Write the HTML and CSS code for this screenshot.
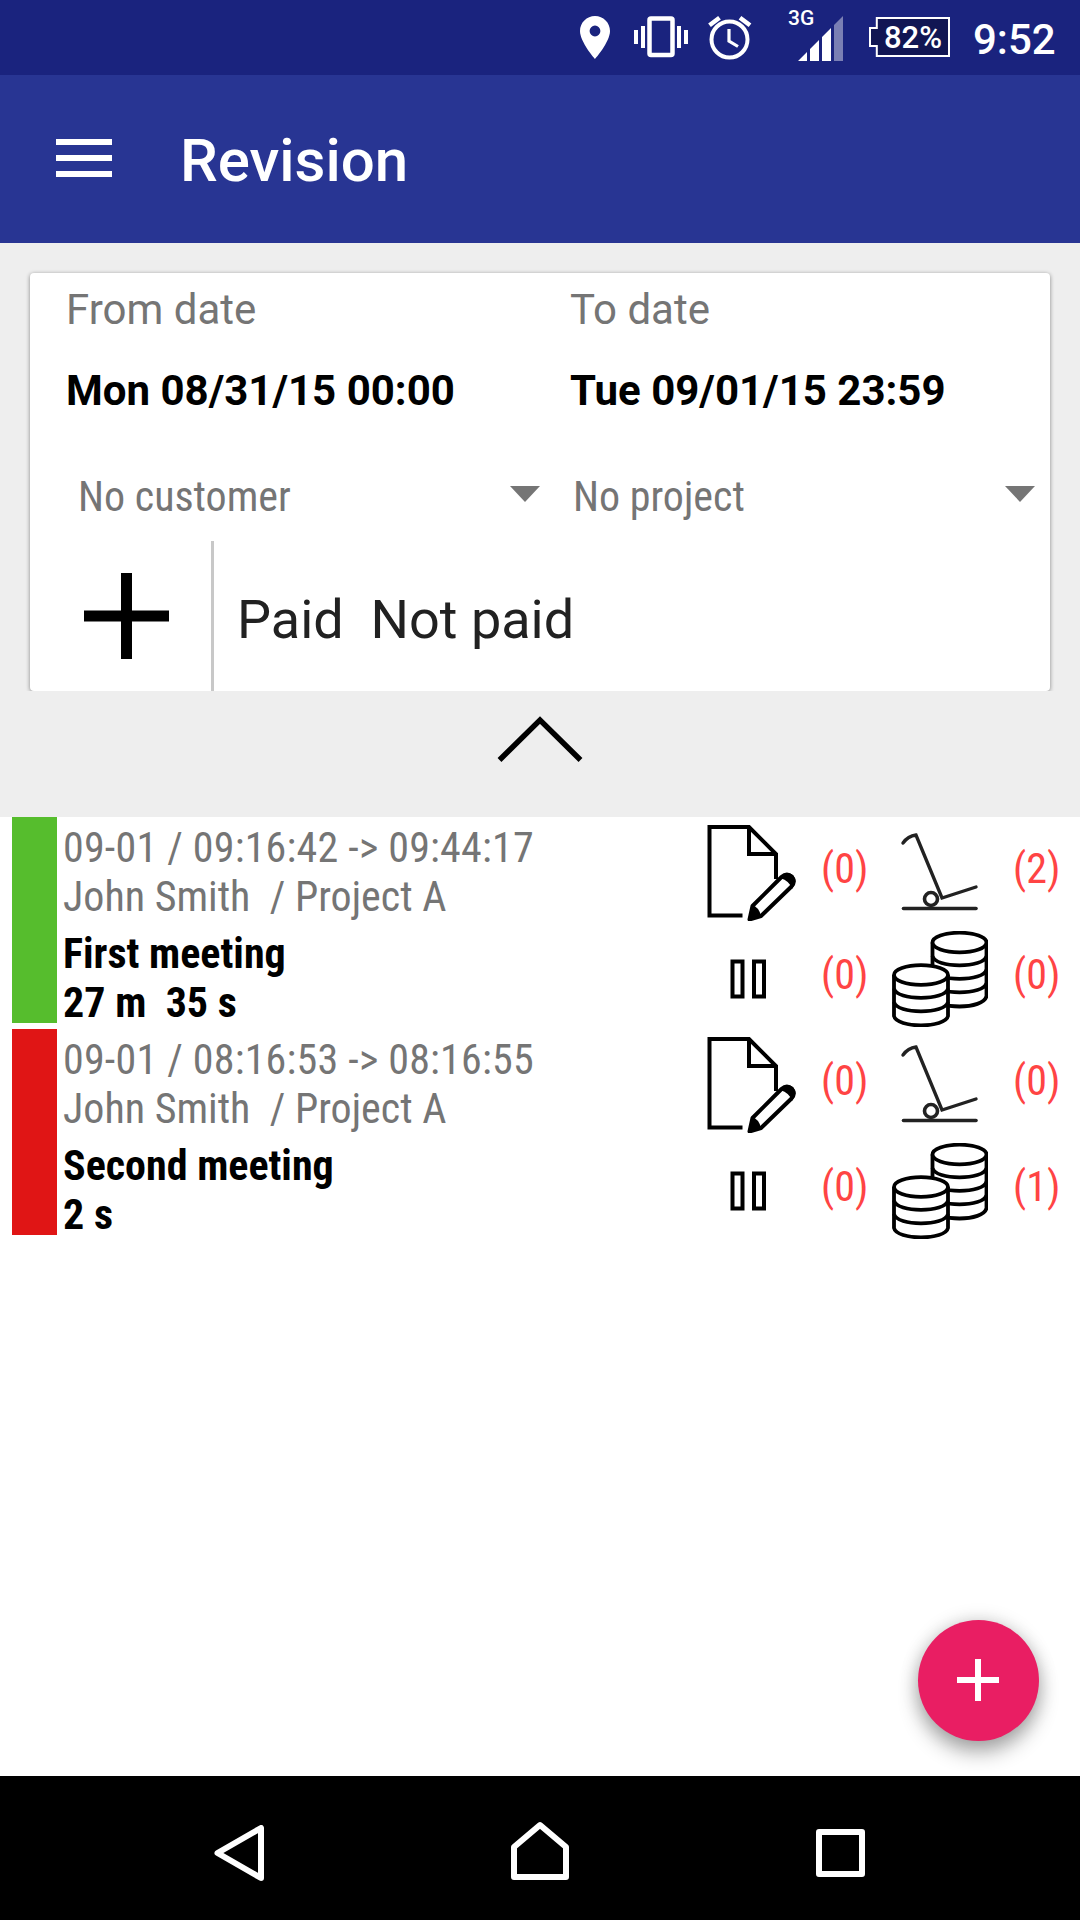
FILE: index.html
```
<!DOCTYPE html>
<html lang="en">
<head>
    <meta charset="UTF-8">
    <meta name="viewport" content="width=device-width, initial-scale=1.0">
    <title>Revision</title>
    <link rel="stylesheet" href="styles.css">
</head>
<body>
    <!-- Shared icons for the work rows -->
    <svg class="sprite" width="0" height="0">
        <symbol id="note" viewBox="0 0 96 96">
            <path d="M42.500 90.500H9.500V2H49L76 29V54M49 2V29H76" fill="none" stroke="#000" stroke-width="4"/>
            <path d="M52.500 81L81.500 52Q87 47 92 52Q96 57 91 62L61 91L49.500 94.500Z" fill="#fff" stroke="#000" stroke-width="4" stroke-linejoin="round"/>
            <path d="M80 53Q86 46 93 50Q98 56 92 64Q90 56 80 53ZM52 80Q59 82 61 91L48.500 95.500Z" fill="#000"/>
        </symbol>
        <symbol id="dolly" viewBox="0 0 96 96">
            <path d="M11 18Q16 11 24 10L50 73L84 62" fill="none" stroke="#222" stroke-width="3.400" stroke-linecap="round"/>
            <circle cx="39" cy="74" r="6.500" fill="none" stroke="#222" stroke-width="3.600"/>
            <path d="M11.500 83.500H84" stroke="#222" stroke-width="3.600" stroke-linecap="round"/>
        </symbol>
        <symbol id="pause" viewBox="0 0 96 96">
            <path d="M32.500 30.500H42.500V65.500H32.500ZM54 30.500H64V65.500H54Z" fill="none" stroke="#000" stroke-width="4"/>
        </symbol>
        <symbol id="coins" viewBox="0 0 96 96">
            <g fill="#fff" stroke="#000" stroke-width="3.800">
                <path d="M40.500 11.500V65C43 79 92 79 94.500 65V11.500"/>
                <path d="M40.500 25C43 37.500 92 37.500 94.500 25M40.500 38.500C43 51 92 51 94.500 38.500M40.500 52C43 64.500 92 64.500 94.500 52" fill="none"/>
                <ellipse cx="67.500" cy="11.500" rx="27" ry="9.800"/>
                <path d="M2 44V85C4.500 97.500 53.500 97.500 56 85V44"/>
                <path d="M2 57.500C4.500 70 53.500 70 56 57.500M2 71C4.500 83.500 53.500 83.500 56 71" fill="none"/>
                <ellipse cx="29" cy="44" rx="27" ry="9.800"/>
            </g>
        </symbol>
    </svg>

    <header class="status-bar">
        <svg class="pin" width="30" height="43" viewBox="0 0 30 43">
            <path fill-rule="evenodd" d="M15 0C6.700 0 0 6.700 0 15C0 26 15 43 15 43S30 26 30 15C30 6.700 23.300 0 15 0ZM15 9.600A5.400 5.400 0 1 1 15 20.400A5.400 5.400 0 1 1 15 9.600Z" fill="#fff"/>
        </svg>
        <svg class="vibrate" width="54" height="42" viewBox="0 0 54 42">
            <rect x="15.500" y="2.500" width="23" height="36.500" rx="1.500" fill="none" stroke="#fff" stroke-width="4.500"/>
            <path d="M0 14H4V28H0ZM7 10H11V32H7ZM43 10H47V32H43ZM50 14H54V28H50Z" fill="#fff"/>
        </svg>
        <svg class="alarm" width="44" height="44" viewBox="0 0 44 44">
            <circle cx="21.500" cy="23.500" r="18" fill="none" stroke="#fff" stroke-width="4"/>
            <path d="M21 13V25L30 30.500" fill="none" stroke="#fff" stroke-width="3.200"/>
            <path d="M1.500 9.300L11.500 1.800M42 9.300L32 1.800" stroke="#fff" stroke-width="4.500"/>
        </svg>
        <div class="signal">
            <span class="network">3G</span>
            <svg width="45" height="45" viewBox="0 0 45 45">
                <path d="M0 45L9 36V45ZM12 33L21 24V45H12ZM24 21L33 12V45H24Z" fill="#fff"/>
                <path d="M36 9L45 0V45H36Z" fill="#fff" fill-opacity="0.420"/>
            </svg>
        </div>
        <div class="battery">
            <svg width="81" height="40" viewBox="0 0 81 40">
                <path d="M7.800 1H80V39H7.800V29H1V11H7.800Z" fill="#111653" stroke="#fff" stroke-width="2"/>
            </svg>
            <span class="percent">82%</span>
        </div>
        <span class="clock">9:52</span>
    </header>

    <div class="toolbar">
        <div class="hamburger"><i></i><i></i><i></i></div>
        <h1>Revision</h1>
    </div>

    <section class="filter">
        <div class="card">
            <div class="dates">
                <div class="label">From date</div>
                <div class="label">To date</div>
                <div class="date">Mon 08/31/15 00:00</div>
                <div class="date">Tue 09/01/15 23:59</div>
            </div>
            <div class="spinners">
                <div class="spinner condensed">No customer</div>
                <div class="spinner condensed">No project</div>
            </div>
            <div class="tags">
                <div class="add-tag">
                    <svg width="85" height="86" viewBox="0 0 85 86">
                        <path d="M0 43H85M42.500 0V86" stroke="#000" stroke-width="11"/>
                    </svg>
                </div>
                <div class="tag-text">Paid&nbsp; Not paid</div>
            </div>
        </div>
        <svg class="collapse" width="86" height="48" viewBox="0 0 86 48">
            <path d="M2.500 45L43 5L83.500 45" fill="none" stroke="#000" stroke-width="5.500"/>
        </svg>
    </section>

    <main class="list">
        <div class="row">
            <div class="marker green"></div>
            <div class="info condensed">
                <div class="time">09-01 / 09:16:42 -&gt; 09:44:17</div>
                <div>John Smith&nbsp; / Project A</div>
                <div class="strong first">First meeting</div>
                <div class="strong">27 m&nbsp; 35 s</div>
            </div>
            <div class="counts condensed">
                <svg><use href="#note"/></svg><span>(0)</span>
                <svg><use href="#dolly"/></svg><span>(2)</span>
                <svg><use href="#pause"/></svg><span>(0)</span>
                <svg><use href="#coins"/></svg><span>(0)</span>
            </div>
        </div>
        <div class="row">
            <div class="marker red"></div>
            <div class="info condensed">
                <div class="time">09-01 / 08:16:53 -&gt; 08:16:55</div>
                <div>John Smith&nbsp; / Project A</div>
                <div class="strong first">Second meeting</div>
                <div class="strong">2 s</div>
            </div>
            <div class="counts condensed">
                <svg><use href="#note"/></svg><span>(0)</span>
                <svg><use href="#dolly"/></svg><span>(0)</span>
                <svg><use href="#pause"/></svg><span>(0)</span>
                <svg><use href="#coins"/></svg><span>(1)</span>
            </div>
        </div>
        <button class="fab" aria-label="Add">
            <svg width="42" height="42" viewBox="0 0 42 42">
                <path d="M0 21H42M21 0V42" stroke="#fff" stroke-width="6"/>
            </svg>
        </button>
    </main>

    <nav class="nav-bar">
        <svg width="50" height="56" viewBox="0 0 50 56">
            <path d="M47 3V53L3.500 28Z" fill="none" stroke="#fff" stroke-width="6" stroke-linejoin="round"/>
        </svg>
        <svg class="home" width="58" height="59" viewBox="0 0 58 59">
            <path d="M3 56V26L29 4L55 26V56Z" fill="none" stroke="#fff" stroke-width="6" stroke-linejoin="round"/>
        </svg>
        <svg width="49" height="48" viewBox="0 0 49 48">
            <rect x="3" y="3" width="43" height="42" fill="none" stroke="#fff" stroke-width="6" stroke-linejoin="round"/>
        </svg>
    </nav>
</body>
</html>
```
FILE: styles.css
```
* {
    box-sizing: border-box;
}

body {
    margin: 0;
    width: 1080px;
    height: 1920px;
    display: flex;
    flex-direction: column;
    overflow: hidden;
    background: #fff;
    font-family: Roboto, sans-serif;
    font-size: 42px;
    line-height: 49px;
}

svg {
    display: block;
    flex: none;
}

.sprite {
    position: absolute;
}

.condensed {
    font-family: "Roboto Condensed", Roboto, sans-serif;
    font-stretch: 75%;
}

/* Status bar */
.status-bar {
    display: flex;
    align-items: flex-start;
    height: 75px;
    padding: 16px 0 0 580px;
    background: #1a237e;
    color: #fff;
    font-weight: 500;
    white-space: nowrap;
}

.vibrate {
    margin-left: 24px;
}

.alarm {
    margin-left: 20px;
}

.signal {
    display: flex;
    width: 55px;
    margin-left: 36px;
}

.network {
    width: 10px;
    margin-top: -10px;
    font-size: 21px;
    line-height: 24px;
}

.battery {
    position: relative;
    margin: 1px 0 0 26px;
}

.percent {
    position: absolute;
    left: 15px;
    top: 0;
    font-size: 31px;
    line-height: 41px;
}

.clock {
    margin: -1px 0 0 23px;
}

/* Toolbar */
.toolbar {
    display: flex;
    align-items: center;
    height: 168px;
    padding-left: 56px;
    background: #283593;
    color: #fff;
}

.hamburger {
    display: flex;
    flex-direction: column;
    gap: 10px;
    width: 56px;
    margin-right: 68px;
    padding-bottom: 2px;
}

.hamburger i {
    height: 6px;
    background: #fff;
}

h1 {
    margin: 0;
    padding-top: 3px;
    font-size: 60px;
    font-weight: 500;
    line-height: 70px;
}

/* Filter card */
.filter {
    height: 574px;
    padding: 30px 30px 0;
    background: #eee;
}

.card {
    height: 418px;
    padding-top: 12px;
    background: #fff;
    border-radius: 4px;
    box-shadow: 0 1px 4px rgba(0, 0, 0, 0.45);
    clip-path: inset(-10px -10px 0);
}

.dates {
    display: grid;
    grid-template-columns: 504px 1fr;
    row-gap: 32px;
    padding-left: 36px;
}

.label {
    color: #757575;
}

.date {
    color: #000;
    font-weight: 700;
}

.spinners {
    display: grid;
    grid-template-columns: 495px 495px;
    margin-top: 57px;
    padding-left: 15px;
    color: #757575;
}

.spinner {
    display: flex;
    align-items: center;
    justify-content: space-between;
    padding: 0 0 0 33px;
}

/* Dropdown arrow */
.spinner::after {
    content: '';
    border: 15px solid transparent;
    border-top: 16px solid #757575;
    border-bottom: 0;
    margin-bottom: 6px;
}

.tags {
    display: flex;
    height: 150px;
    margin-top: 20px;
}

.add-tag {
    display: flex;
    align-items: center;
    width: 184px;
    padding-left: 54px;
    border-right: 3px solid #c8c8c8;
}

.tag-text {
    padding: 7px 0 0 23px;
    color: #212121;
    font-size: 54px;
    line-height: 143px;
}

.collapse {
    margin: 24px auto 0;
}

/* Work list */
.list {
    position: relative;
    flex: 1;
    background: #fff;
}

.row {
    display: flex;
    height: 212px;
    padding-left: 12px;
}

.marker {
    width: 45px;
    height: 206px;
}

.marker.green {
    background: #56bd2d;
}

.marker.red {
    background: #e01515;
}

.info {
    width: 643px;
    padding: 6px 0 0 6px;
    color: #757575;
    white-space: nowrap;
}

.time {
    letter-spacing: 0.2px;
}

.strong {
    color: #000;
    font-weight: 700;
}

.strong.first {
    margin-top: 8px;
}

.counts {
    display: grid;
    grid-template-columns: 96px 72px 96px 60px;
    column-gap: 12px;
    grid-auto-rows: 106px;
    padding-top: 8px;
    color: #ff4444;
}

.counts svg {
    width: 96px;
    height: 96px;
}

.counts span {
    padding: 19px 0 0 13px;
}

.fab {
    position: absolute;
    left: 917.5px;
    top: 802.5px;
    width: 121px;
    height: 121px;
    display: flex;
    align-items: center;
    justify-content: center;
    padding: 0;
    border: 0;
    border-radius: 50%;
    background: #e91e63;
    box-shadow: 0 12px 20px rgba(0, 0, 0, 0.3), 0 0 18px rgba(0, 0, 0, 0.17);
}

/* Android navigation */
.nav-bar {
    display: flex;
    align-items: center;
    justify-content: space-between;
    height: 144px;
    padding: 9px 215px 0 214px;
    background: #000;
}

.home {
    margin-bottom: 4px;
}
```
